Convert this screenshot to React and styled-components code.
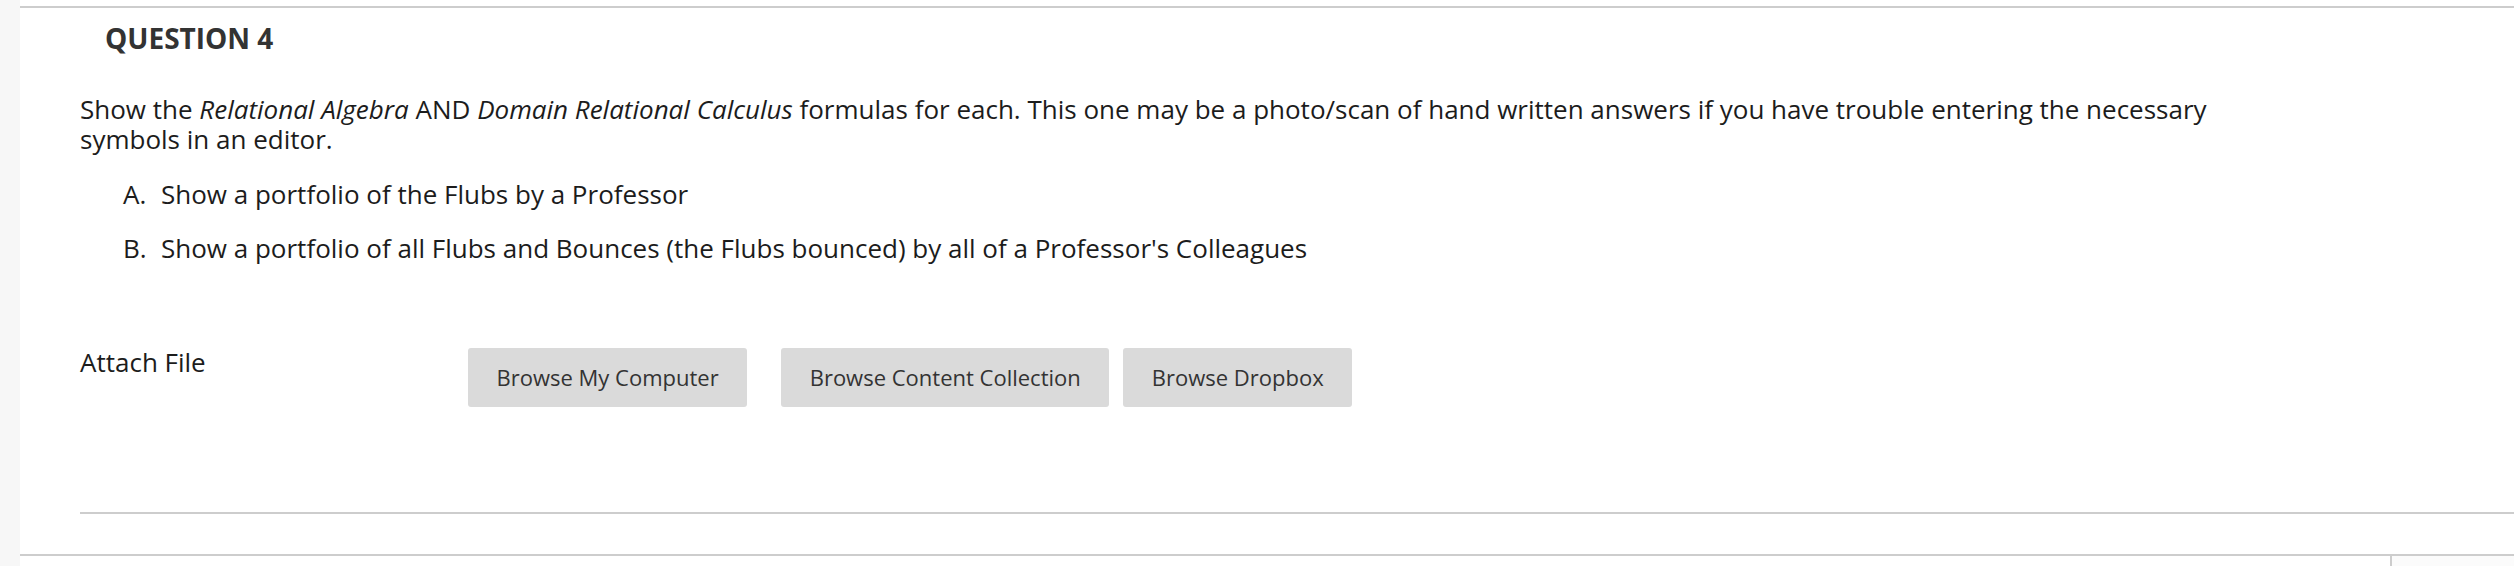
import React from 'react'
import styled, { createGlobalStyle } from 'styled-components'

const GlobalStyle = createGlobalStyle`
    html, body {
        margin: 0;
        padding: 0;
        background: #ffffff;
    }
    body {
        font-family: "Open Sans", "Noto Sans", sans-serif;
        color: #1c1c1c;
    }
`

const Page = styled.div`
    display: flex;
    min-height: 100vh;
    overflow: hidden;
`

const SideStrip = styled.div`
    width: 20px;
    flex-shrink: 0;
    background-color: #f7f7f7;
`

const Main = styled.div`
    flex: 1;
    padding-top: 6px;
`

const QuestionBlock = styled.section`
    border-top: 2px solid #cdcdcd;
`

const QuestionTitle = styled.h2`
    margin: 0;
    padding: 11px 0 0 85px;
    font-size: 28px;
    line-height: 38px;
    font-weight: 700;
    color: #333333;
`

const QuestionBody = styled.div`
    margin-left: 60px;
    padding: 37px 0 105px;
    border-bottom: 2px solid #cdcdcd;
    font-size: 26px;
    line-height: 30px;
`

const Prompt = styled.p`
    margin: 0;
    max-width: 2180px;
`

const Parts = styled.ol`
    list-style: none;
    margin: 25px 0 0;
    padding: 0 0 0 43px;
`

const Part = styled.li`
    display: flex;
    margin-bottom: 24px;

    &:last-child {
        margin-bottom: 0;
    }
`

const Marker = styled.span`
    width: 38px;
    flex-shrink: 0;
`

const AttachRow = styled.div`
    display: flex;
    align-items: flex-start;
    margin-top: 84px;
`

const AttachLabel = styled.div`
    width: 388px;
    flex-shrink: 0;
`

const ButtonGroup = styled.div`
    display: flex;
    gap: 14px;
    padding-top: 1px;
`

const Button = styled.button`
    font-family: "Open Sans", "Noto Sans", sans-serif;
    font-size: 22px;
    line-height: 29px;
    padding: 15px 28.5px;
    margin-right: ${props => props.$spaced ? '20px' : '0'};
    background-color: #dadada;
    color: #333333;
    border: 0;
    border-radius: 3px;
    cursor: pointer;
`

const NextBlock = styled.div`
    display: flex;
    margin-top: 40px;
    border-top: 2px solid #cdcdcd;
    height: 10px;
`

const NextFiller = styled.div`
    flex: 1;
`

const NextSide = styled.div`
    width: 122px;
    border-left: 2px solid #cdcdcd;
    background-color: #fbfbfb;
`

export default function App() {
    return (
        <>
            <GlobalStyle />
            <Page>
                <SideStrip />
                <Main>
                    <QuestionBlock>
                        <QuestionTitle>QUESTION 4</QuestionTitle>
                        <QuestionBody>
                            <Prompt>
                                Show the <em>Relational Algebra</em> AND <em>Domain Relational Calculus</em> formulas
                                for each. This one may be a photo/scan of hand written answers if you have trouble
                                entering the necessary symbols in an editor.
                            </Prompt>
                            <Parts>
                                <Part>
                                    <Marker>A.</Marker>
                                    <span>Show a portfolio of the Flubs by a Professor</span>
                                </Part>
                                <Part>
                                    <Marker>B.</Marker>
                                    <span>Show a portfolio of all Flubs and Bounces (the Flubs bounced) by all of a Professor's Colleagues</span>
                                </Part>
                            </Parts>
                            <AttachRow>
                                <AttachLabel>Attach File</AttachLabel>
                                <ButtonGroup>
                                    <Button $spaced>Browse My Computer</Button>
                                    <Button>Browse Content Collection</Button>
                                    <Button>Browse Dropbox</Button>
                                </ButtonGroup>
                            </AttachRow>
                        </QuestionBody>
                    </QuestionBlock>
                    <NextBlock>
                        <NextFiller />
                        <NextSide />
                    </NextBlock>
                </Main>
            </Page>
        </>
    )
}
